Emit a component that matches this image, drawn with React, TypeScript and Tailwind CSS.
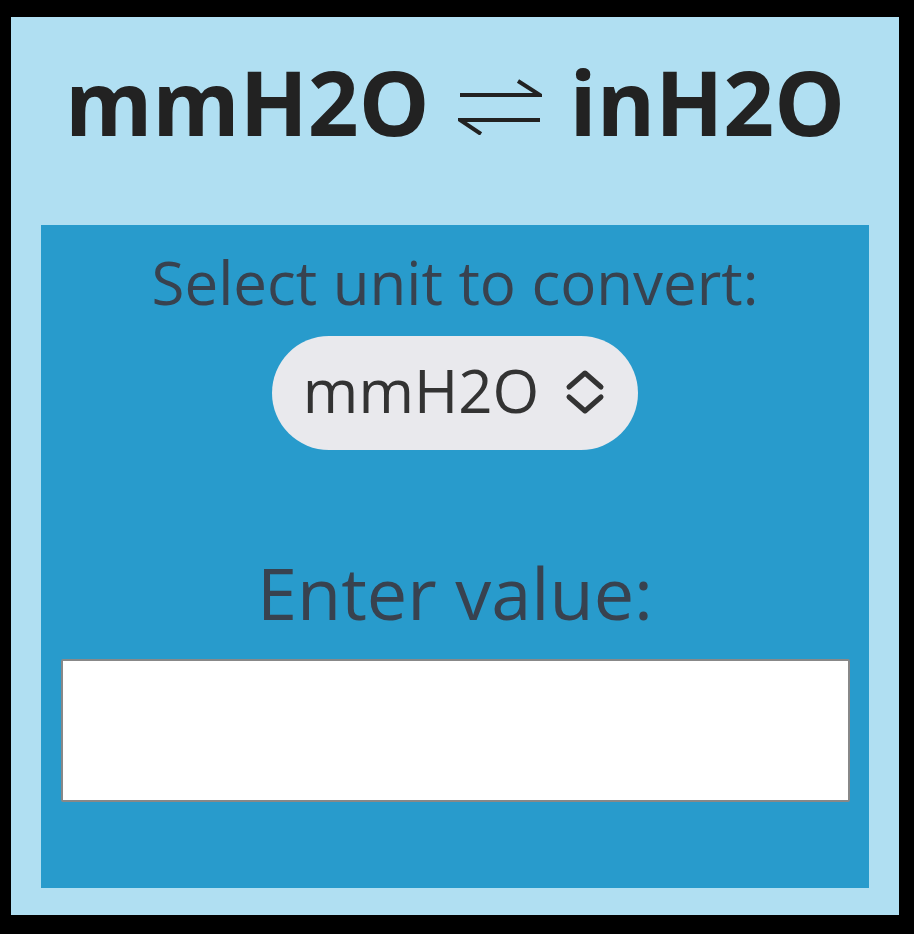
import React from "react";

export default function App() {
  return (
    <div className="w-[920px] h-[934px] bg-white">
      <div className="w-[914px] h-[934px] bg-black pt-[17px] pl-[11px] pr-[14px] pb-[19px]">
        <div className="w-[888px] h-[898px] bg-[#b0dff2] flex flex-col">
          <div className="h-[208px] flex items-center justify-center gap-[28px] text-[#222222] font-['Open_Sans',sans-serif] font-bold text-[89px] leading-none pb-[40px]">
            <span>mmH2O</span>
            <svg width="84" height="60" viewBox="0 0 84 60" className="shrink-0 mt-[8px]">
              <path d="M2 20 H82 L60 6" fill="none" stroke="#222" strokeWidth="4" />
              <path d="M82 45 H2 L23 59" fill="none" stroke="#222" strokeWidth="4" />
            </svg>
            <span>inH2O</span>
          </div>
          <div className="mx-[30px] h-[663px] bg-[#289bcc] flex flex-col items-center font-['Open_Sans',sans-serif] text-[#38424f]">
            <div className="mt-[27px] text-[60px] leading-none">Select unit to convert:</div>
            <div className="mt-[24px] w-[366px] h-[114px] rounded-full bg-[#e9e9ed] flex items-center justify-center gap-[26px] pr-[2px]">
              <span className="text-[60px] leading-none text-[#333] pb-[6px]">mmH2O</span>
              <svg width="40" height="48" viewBox="0 0 40 48">
                <path d="M4 18 L20 4 L36 18" fill="none" stroke="#333" strokeWidth="5" strokeLinecap="round" strokeLinejoin="round" />
                <path d="M4 28 L20 42 L36 28" fill="none" stroke="#333" strokeWidth="5" strokeLinecap="round" strokeLinejoin="round" />
              </svg>
            </div>
            <div className="mt-[106px] text-[72px] leading-none">Enter value:</div>
            <input className="mt-[31px] w-[789px] h-[143px] bg-white border-2 border-[#888888] rounded-[2px] outline-none" />
          </div>
        </div>
      </div>
    </div>
  );
}
